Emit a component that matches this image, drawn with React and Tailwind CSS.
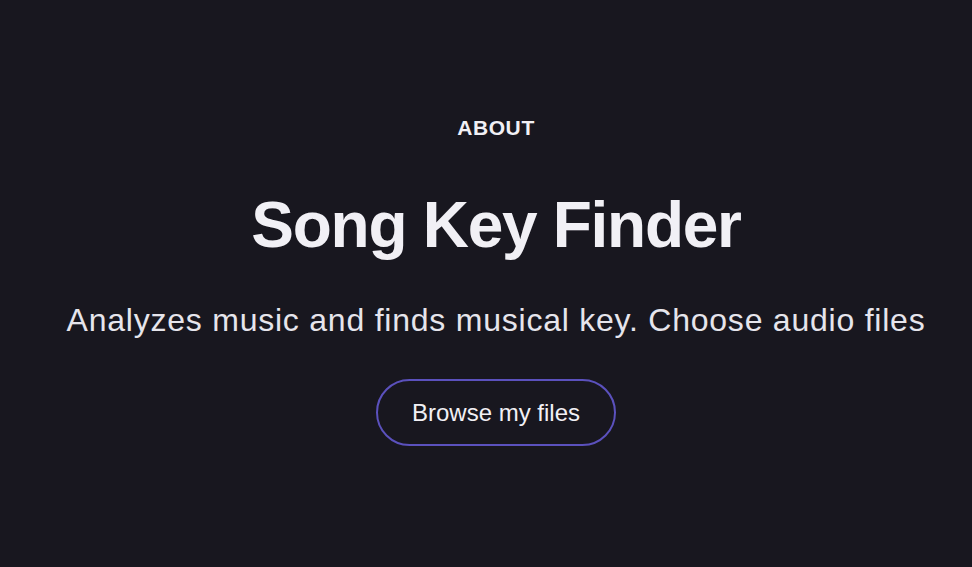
import React from "react";

const App = () => {
  return (
    <div
      className="min-h-screen w-full bg-[#18171f] text-[#f1f0f5] flex flex-col items-center pt-[117px] pl-[20px]"
      style={{ fontFamily: '"Liberation Sans", Arial, sans-serif' }}
    >
      {/* section label */}
      <p className="text-[21px] leading-none font-bold tracking-[0.6px]">ABOUT</p>

      {/* title */}
      <h1 className="mt-[55px] text-[64px] leading-none font-bold tracking-[-0.02em]">
        Song Key Finder
      </h1>

      {/* description */}
      <p className="mt-[47px] text-[32px] leading-none tracking-[0.024em] text-[#e6e5ec]">
        Analyzes music and finds musical key. Choose audio files
      </p>

      <button className="mt-[43px] h-[67px] px-[34px] rounded-full border-2 border-[#5b51bd] text-[24px] leading-none text-[#f1f0f5]">
        Browse my files
      </button>
    </div>
  );
};

export default App;
